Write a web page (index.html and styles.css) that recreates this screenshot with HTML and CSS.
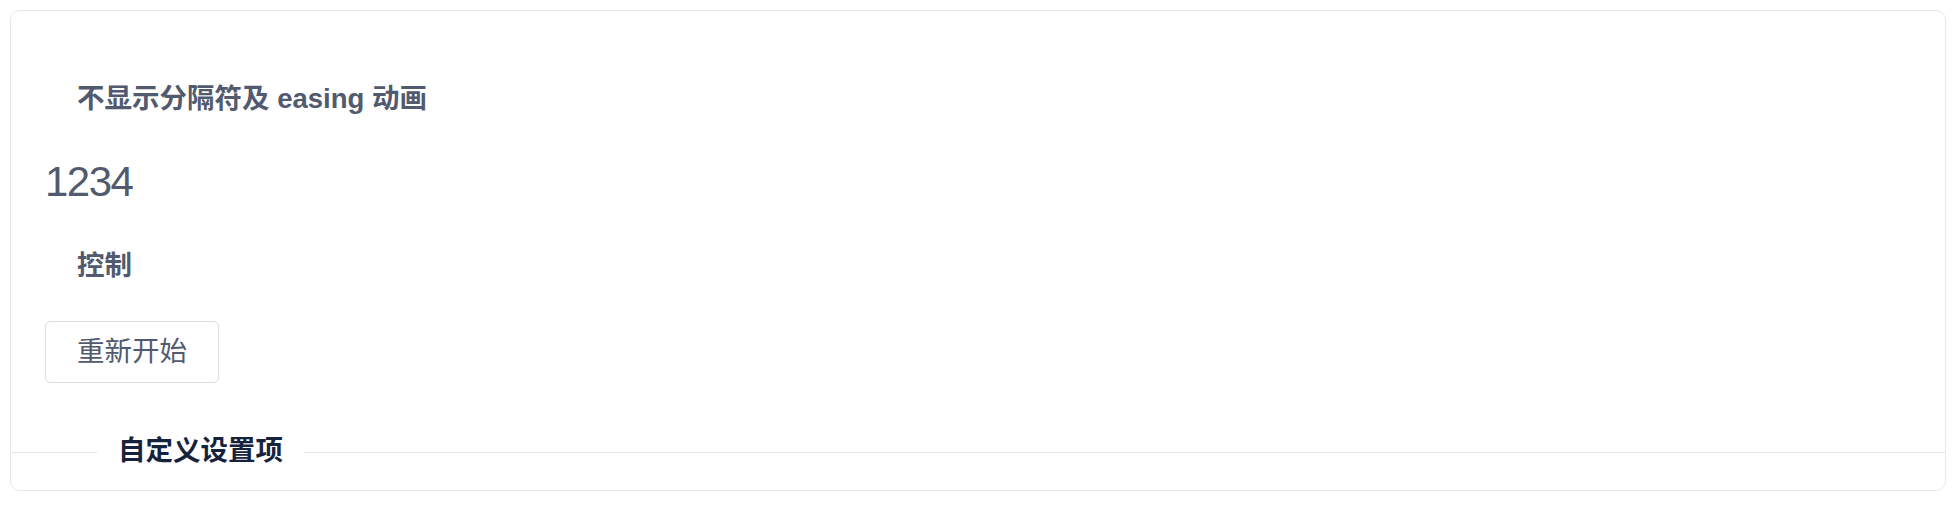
FILE: index.html
```html
<!DOCTYPE html>
<html lang="zh-CN">
<head>
<meta charset="utf-8">
<title>CountUp</title>
<link rel="stylesheet" href="styles.css">
</head>
<body>
  <div class="card">
    <div class="card-body">
      <h3 class="section-title">不显示分隔符及 easing 动画</h3>
      <div class="count">1234</div>
      <h3 class="section-title">控制</h3>
      <button class="btn" type="button">重新开始</button>
    </div>
    <div class="divider">
      <span class="divider-text">自定义设置项</span>
    </div>
  </div>
</body>
</html>
```

FILE: styles.css
```css
html, body {
  margin: 0;
  padding: 0;
  background: #ffffff;
}

body {
  font-family: "Liberation Sans", "Noto Sans CJK SC", sans-serif;
  color: #515a6e;
}

.card {
  margin: 10px 14px 0 10px;
  height: 479px;
  border: 1px solid #e6e8eb;
  border-radius: 10px;
  box-sizing: content-box;
  overflow: hidden;
  display: flex;
  flex-direction: column;
}

.card-body {
  padding: 68px 0 0 34px;
  display: flex;
  flex-direction: column;
  align-items: flex-start;
}

.section-title {
  margin: 0;
  padding-left: 32px;
  font-size: 27.5px;
  line-height: 40px;
  font-weight: 700;
  color: #515a6e;
}

.count {
  margin: 38px 0 39px 0;
  font-size: 42px;
  line-height: 50px;
  letter-spacing: -1.5px;
  color: #515a6e;
}

.btn {
  margin-top: 35px;
  height: 62px;
  padding: 0 31px;
  border: 1px solid #d9dce2;
  border-radius: 5px;
  background: #ffffff;
  font-family: "Liberation Sans", "Noto Sans CJK SC", sans-serif;
  font-size: 27.5px;
  color: #515a6e;
  line-height: 60px;
  cursor: pointer;
}

.divider {
  margin-top: 48px;
  display: flex;
  align-items: center;
  height: 40px;
}

.divider::before,
.divider::after {
  content: "";
  height: 1px;
  background: #e3e5e9;
  position: relative;
  top: 1px;
}

.divider::before {
  width: 86px;
  flex: 0 0 86px;
}

.divider::after {
  flex: 1 1 auto;
}

.divider-text {
  padding: 0 21px;
  font-size: 27.5px;
  line-height: 40px;
  font-weight: 700;
  color: #17233d;
  white-space: nowrap;
}
```
